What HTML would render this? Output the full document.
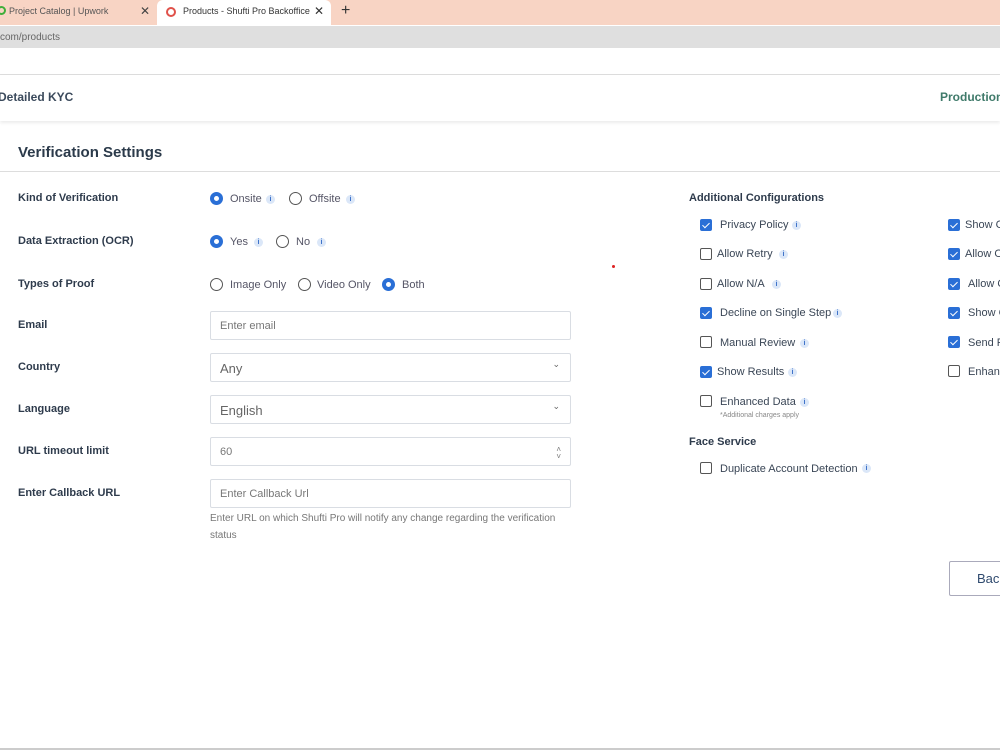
<!DOCTYPE html>
<html><head><meta charset="utf-8"><style>
*{box-sizing:border-box;margin:0;padding:0}
body{width:1000px;height:750px;overflow:hidden;background:#fff;font-family:"Liberation Sans",sans-serif;position:relative;color:#2b3a4a}
.a{position:absolute;white-space:nowrap}
.lbl{font-size:11px;color:#2e3b4c;font-weight:bold}
.rad{position:absolute;width:13px;height:13px;border-radius:50%;border:1px solid #555;background:#fff}
.rad.on{border:4px solid #2a6fd6}
.rt{font-size:11px;color:#556}
.i{position:absolute;width:9px;height:9px;border-radius:50%;background:#dbe7f8;color:#3a6fc8;font-size:7px;line-height:9px;text-align:center;font-weight:bold}
.inp{position:absolute;left:210px;width:361px;height:29px;border:1px solid #d9dde3;border-radius:2px;font-size:11px;color:#777;padding-left:9px;line-height:29px}
.cb{position:absolute;width:12px;height:12px;border:1.3px solid #555;border-radius:2px;background:#fff}
.cb.on{background:#2a6fd6;border-color:#2a6fd6}
.cb.on:after{content:"";position:absolute;left:3px;top:0.5px;width:3px;height:6px;border:solid #fff;border-width:0 1.6px 1.6px 0;transform:rotate(45deg)}
.ct{font-size:11px;color:#3a4656}
</style></head><body>
<div class="a" style="left:0;top:0;width:1000px;height:25px;background:#f8d4c4"></div>
<div class="a" style="left:0;top:6px;width:9px;height:9px;border-radius:50%;border:2px solid #3fae3a;left:-3px"></div>
<div class="a" style="left:9px;top:6px;font-size:9px;color:#555">Project Catalog | Upwork</div>
<div class="a" style="left:140px;top:4px;font-size:12px;color:#444">✕</div>
<div class="a" style="left:157px;top:0;width:174px;height:26px;background:#fff;border-radius:6px 6px 0 0"></div>
<div class="a" style="left:166px;top:7px;width:10px;height:10px;border-radius:50%;border:2.2px solid #e0514a"></div>
<div class="a" style="left:183px;top:6px;font-size:9px;color:#333">Products - Shufti Pro Backoffice</div>
<div class="a" style="left:314px;top:4px;font-size:12px;color:#333">✕</div>
<div class="a" style="left:341px;top:2px;font-size:16px;color:#333">+</div>
<div class="a" style="left:0;top:26px;width:1000px;height:22px;background:#dfdfdf"></div>
<div class="a" style="left:0;top:32px;font-size:10px;color:#666">com/products</div>
<div class="a" style="left:0;top:74px;width:1000px;height:1px;background:#ddd"></div>
<div class="a" style="left:0;top:75px;width:1000px;height:46px;background:#fff;box-shadow:0 2px 3px rgba(0,0,0,.08)"></div>
<div class="a" style="left:-2px;top:90px;font-size:12px;font-weight:bold;color:#3b4a5c">Detailed KYC</div>
<div class="a" style="left:940px;top:90px;font-size:12px;font-weight:bold;color:#3f7a6a">Production</div>
<div class="a" style="left:18px;top:144px;font-size:15px;font-weight:bold;color:#2b3a4a">Verification Settings</div>
<div class="a" style="left:0;top:171px;width:1000px;height:1px;background:#ddd"></div>

<div class="a lbl" style="left:18px;top:192px">Kind of Verification</div>
<div class="a lbl" style="left:18px;top:235px">Data Extraction (OCR)</div>
<div class="a lbl" style="left:18px;top:278px">Types of Proof</div>
<div class="a lbl" style="left:18px;top:319px">Email</div>
<div class="a lbl" style="left:18px;top:361px">Country</div>
<div class="a lbl" style="left:18px;top:403px">Language</div>
<div class="a lbl" style="left:18px;top:445px">URL timeout limit</div>
<div class="a lbl" style="left:18px;top:487px">Enter Callback URL</div>

<div class="rad on" style="left:210px;top:192px"></div><div class="a rt" style="left:230px;top:193px">Onsite</div><div class="i" style="left:266px;top:195px">i</div>
<div class="rad" style="left:289px;top:192px"></div><div class="a rt" style="left:309px;top:193px">Offsite</div><div class="i" style="left:346px;top:195px">i</div>
<div class="rad on" style="left:210px;top:235px"></div><div class="a rt" style="left:230px;top:236px">Yes</div><div class="i" style="left:254px;top:238px">i</div>
<div class="rad" style="left:276px;top:235px"></div><div class="a rt" style="left:296px;top:236px">No</div><div class="i" style="left:317px;top:238px">i</div>
<div class="rad" style="left:210px;top:278px"></div><div class="a rt" style="left:230px;top:279px">Image Only</div>
<div class="rad" style="left:298px;top:278px"></div><div class="a rt" style="left:317px;top:279px">Video Only</div>
<div class="rad on" style="left:382px;top:278px"></div><div class="a rt" style="left:402px;top:279px">Both</div>

<div class="inp" style="top:311px">Enter email</div>
<div class="inp" style="top:353px;font-size:13px;color:#666">Any<span style="position:absolute;right:10px;top:-4px;font-size:9px">&#8964;</span></div>
<div class="inp" style="top:395px;font-size:13px;color:#666">English<span style="position:absolute;right:10px;top:-4px;font-size:9px">&#8964;</span></div>
<div class="inp" style="top:437px">60<span style="position:absolute;right:9px;top:0;font-size:8px;line-height:7px;padding-top:8px">&#708;<br>&#709;</span></div>
<div class="inp" style="top:479px">Enter Callback Url</div>
<div class="a" style="left:210px;top:510px;font-size:10px;color:#777;line-height:17px;white-space:normal;width:370px">Enter URL on which Shufti Pro will notify any change regarding the verification status</div>

<div class="a" style="left:612px;top:265px;width:3px;height:3px;border-radius:50%;background:#d22"></div>

<div class="a lbl" style="left:689px;top:192px">Additional Configurations</div>
<div class="cb on" style="left:700px;top:219px"></div><div class="a ct" style="left:720px;top:219px">Privacy Policy</div><div class="i" style="left:792px;top:221px">i</div>
<div class="cb" style="left:700px;top:248px"></div><div class="a ct" style="left:717px;top:248px">Allow Retry</div><div class="i" style="left:779px;top:250px">i</div>
<div class="cb" style="left:700px;top:278px"></div><div class="a ct" style="left:717px;top:278px">Allow N/A</div><div class="i" style="left:772px;top:280px">i</div>
<div class="cb on" style="left:700px;top:307px"></div><div class="a ct" style="left:720px;top:307px">Decline on Single Step</div><div class="i" style="left:833px;top:309px">i</div>
<div class="cb" style="left:700px;top:336px"></div><div class="a ct" style="left:720px;top:337px">Manual Review</div><div class="i" style="left:800px;top:339px">i</div>
<div class="cb on" style="left:700px;top:366px"></div><div class="a ct" style="left:717px;top:366px">Show Results</div><div class="i" style="left:788px;top:368px">i</div>
<div class="cb" style="left:700px;top:395px"></div><div class="a ct" style="left:720px;top:396px">Enhanced Data</div><div class="i" style="left:800px;top:398px">i</div>
<div class="a" style="left:720px;top:412px;font-size:7px;color:#888">*Additional charges apply</div>
<div class="a lbl" style="left:689px;top:436px">Face Service</div>
<div class="cb" style="left:700px;top:462px"></div><div class="a ct" style="left:720px;top:463px">Duplicate Account Detection</div><div class="i" style="left:862px;top:464px">i</div>

<div class="cb on" style="left:948px;top:219px"></div><div class="a ct" style="left:965px;top:219px">Show Consent</div>
<div class="cb on" style="left:948px;top:248px"></div><div class="a ct" style="left:965px;top:248px">Allow Online</div>
<div class="cb on" style="left:948px;top:278px"></div><div class="a ct" style="left:968px;top:278px">Allow Offline</div>
<div class="cb on" style="left:948px;top:307px"></div><div class="a ct" style="left:968px;top:307px">Show Countries</div>
<div class="cb on" style="left:948px;top:336px"></div><div class="a ct" style="left:968px;top:337px">Send Feedback</div>
<div class="cb" style="left:948px;top:365px"></div><div class="a ct" style="left:968px;top:366px">Enhanced</div>

<div class="a" style="left:949px;top:561px;width:70px;height:35px;border:1px solid #aab;border-radius:2px"></div>
<div class="a" style="left:977px;top:571px;font-size:13px;color:#2f4a6e">Back</div>
<div class="a" style="left:0;top:748px;width:1000px;height:2px;background:#ccc"></div>
</body></html>
